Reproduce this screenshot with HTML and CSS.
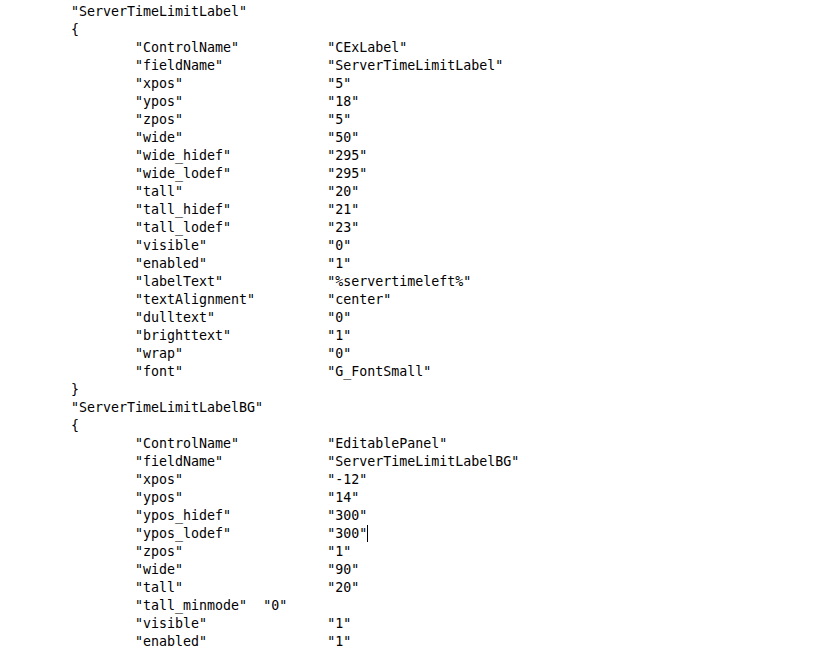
FILE: index.html
```html
<!DOCTYPE html>
<html>
<head>
<meta charset="utf-8">
<link rel="stylesheet" href="styles.css">
</head>
<body>
<pre class="editor">"ServerTimeLimitLabel"
{
	"ControlName"		"CExLabel"
	"fieldName"		"ServerTimeLimitLabel"
	"xpos"			"5"
	"ypos"			"18"
	"zpos"			"5"
	"wide"			"50"
	"wide_hidef"		"295"
	"wide_lodef"		"295"
	"tall"			"20"
	"tall_hidef"		"21"
	"tall_lodef"		"23"
	"visible"		"0"
	"enabled"		"1"
	"labelText"		"%servertimeleft%"
	"textAlignment"		"center"
	"dulltext"		"0"
	"brighttext"		"1"
	"wrap"			"0"
	"font"			"G_FontSmall"
}
"ServerTimeLimitLabelBG"
{
	"ControlName"		"EditablePanel"
	"fieldName"		"ServerTimeLimitLabelBG"
	"xpos"			"-12"
	"ypos"			"14"
	"ypos_hidef"		"300"
	"ypos_lodef"		"300"<span class="caret"></span>
	"zpos"			"1"
	"wide"			"90"
	"tall"			"20"
	"tall_minmode"	"0"
	"visible"		"1"
	"enabled"		"1"</pre>
</body>
</html>
```
FILE: styles.css
```css
html, body {
  margin: 0;
  padding: 0;
  background: #ffffff;
}
.editor {
  margin: 0;
  padding: 3px 0 0 71px;
  font-family: "DejaVu Sans Mono", "Liberation Mono", monospace;
  font-size: 13.3px;
  line-height: 18px;
  color: #000000;
  tab-size: 8;
  -moz-tab-size: 8;
  white-space: pre;
}
.caret {
  display: inline-block;
  width: 1px;
  height: 17px;
  background: #000000;
  vertical-align: -4px;
}
```
